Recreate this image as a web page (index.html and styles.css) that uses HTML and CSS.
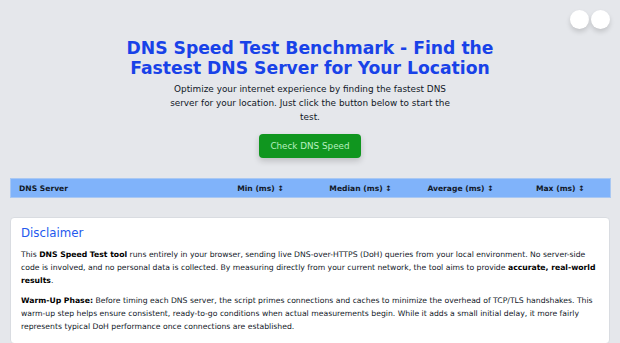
FILE: index.html
```html
<!DOCTYPE html>
<html lang="en">
<head>
<meta charset="utf-8">
<title>DNS Speed Test Benchmark</title>
<link rel="stylesheet" href="styles.css">
</head>
<body>
<div class="toggles">
  <span class="dot"></span>
  <span class="dot"></span>
</div>
<main class="page">
  <header class="hero">
    <h1 class="title">DNS Speed Test Benchmark - Find the Fastest DNS Server for Your Location</h1>
    <p class="lead">Optimize your internet experience by finding the fastest DNS server for your location. Just click the button below to start the test.</p>
    <button class="check-btn" type="button">Check DNS Speed</button>
  </header>
  <table class="results">
    <thead>
      <tr>
        <th class="col-server">DNS Server</th>
        <th>Min (ms) <span class="sort">&#x2195;</span></th>
        <th>Median (ms) <span class="sort">&#x2195;</span></th>
        <th>Average (ms) <span class="sort">&#x2195;</span></th>
        <th>Max (ms) <span class="sort">&#x2195;</span></th>
      </tr>
    </thead>
  </table>
  <section class="card">
    <h2 class="card-title">Disclaimer</h2>
    <p>This <strong>DNS Speed Test tool</strong> runs entirely in your browser, sending live DNS-over-HTTPS (DoH) queries from your local environment. No server-side code is involved, and no personal data is collected. By measuring directly from your current network, the tool aims to provide <strong>accurate, real-world results</strong>.</p>
    <p><strong>Warm-Up Phase:</strong> Before timing each DNS server, the script primes connections and caches to minimize the overhead of TCP/TLS handshakes. This warm-up step helps ensure consistent, ready-to-go conditions when actual measurements begin. While it adds a small initial delay, it more fairly represents typical DoH performance once connections are established.</p>
  </section>
</main>
</body>
</html>
```
FILE: styles.css
```css
* { box-sizing: border-box; }
html, body { margin: 0; padding: 0; }
body {
  background: #e5e7eb;
  font-family: "DejaVu Sans", sans-serif;
  color: #1f2937;
  overflow: hidden;
}
.toggles {
  position: absolute;
  top: 10px;
  right: 10px;
  display: flex;
  gap: 2px;
}
.dot {
  width: 19px;
  height: 19px;
  border-radius: 50%;
  background: #fff;
  box-shadow: 0 3px 5px rgba(0,0,0,0.15);
}
.page {
  padding: 38px 10px 0;
}
.hero {
  display: flex;
  flex-direction: column;
  align-items: center;
  text-align: center;
}
.title {
  margin: 0;
  max-width: 400px;
  font-size: 17.2px;
  line-height: 20px;
  font-weight: bold;
  color: #1842e8;
}
.lead {
  margin: 4px 0 0;
  max-width: 285px;
  font-size: 8.9px;
  line-height: 14px;
  color: #111827;
}
.check-btn {
  margin-top: 10px;
  width: 102px;
  height: 24px;
  border: none;
  border-radius: 4px;
  background: #10961f;
  color: #b7f0bf;
  font-family: "DejaVu Sans", sans-serif;
  font-size: 8.8px;
  box-shadow: 0 3px 6px rgba(0,0,0,0.18);
}
.results {
  margin-top: 20px;
  width: 600px;
  border-collapse: collapse;
  table-layout: fixed;
  background: #80b3fa;
  border: 1px solid #a9c8f3;
}
.results th {
  height: 19px;
  padding: 0;
  font-size: 7.6px;
  font-weight: bold;
  color: #111827;
  width: 100px;
  text-align: center;
}
.results th.col-server {
  width: 200px;
  text-align: left;
  padding-left: 8px;
}
.sort { font-size: 7.6px; }
.card {
  margin-top: 19px;
  background: #fff;
  border: 1px solid #d9dce1;
  border-radius: 4px;
  padding: 7px 10px 10px;
}
.card-title {
  margin: 0;
  font-size: 11.8px;
  line-height: 16px;
  font-weight: normal;
  color: #2459ee;
}
.card p {
  margin: 6.5px 0 0;
  font-size: 7.7px;
  line-height: 13px;
  color: #111827;
}
.card p + p { margin-top: 7px; }
.card strong { color: #000; }
```
